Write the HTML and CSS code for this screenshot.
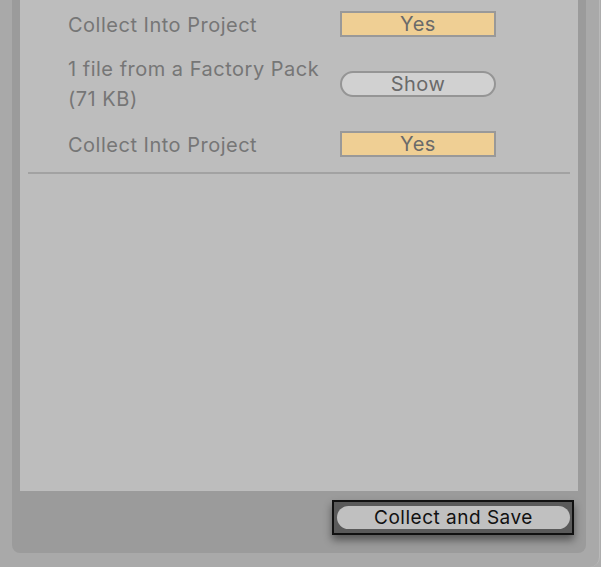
FILE: index.html
```html
<!DOCTYPE html>
<html>
<head>
<meta charset="utf-8">
<link rel="stylesheet" href="styles.css">
</head>
<body>
<div class="frame">
  <div class="dialog">
    <div class="content">
      <div class="row row-single">
        <div class="label">Collect Into Project</div>
        <div class="toggle">Yes</div>
      </div>
      <div class="row row-double">
        <div class="label">1 file from a Factory Pack (71 KB)</div>
        <div class="pill">Show</div>
      </div>
      <div class="row row-single">
        <div class="label">Collect Into Project</div>
        <div class="toggle">Yes</div>
      </div>
      <div class="separator"></div>
    </div>
    <div class="footer">
      <div class="focus-box">
        <div class="primary">Collect and Save</div>
      </div>
    </div>
  </div>
</div>
</body>
</html>
```
FILE: styles.css
```css
html, body {
  margin: 0;
  padding: 0;
}
body {
  width: 601px;
  height: 567px;
  background: #acacac;
  overflow: hidden;
  font-family: Inter, "Liberation Sans", sans-serif;
  font-weight: 400;
}
.frame {
  width: 600px;
  height: 567px;
  border-right: 1px solid #b9b9b9;
  box-sizing: border-box;
  background: #a9a9a9;
  border-radius: 0 0 10px 0;
}
.dialog {
  margin-left: 12px;
  width: 574px;
  height: 553px;
  box-sizing: border-box;
  padding: 0 8px;
  background: #9b9b9b;
  border-radius: 0 0 8px 8px;
  display: flex;
  flex-direction: column;
}
.content {
  height: 491px;
  background: #bdbdbd;
  display: flex;
  flex-direction: column;
}
.row {
  display: flex;
  align-items: center;
  padding-left: 48px;
}
.row-single { height: 48px; }
.row-double { height: 72px; }
.label {
  width: 272px;
  font-size: 20px;
  letter-spacing: 0.5px;
  line-height: 30px;
  color: #767676;
  padding-top: 2px;
}
.row-double .label {
  padding-top: 0;
}
.toggle {
  width: 156px;
  height: 26px;
  box-sizing: border-box;
  border: 2px solid #999999;
  background: #efcf94;
  color: #6a6a6a;
  font-size: 20px;
  letter-spacing: 0.5px;
  line-height: 23px;
  text-align: center;
}
.pill {
  width: 156px;
  height: 26px;
  box-sizing: border-box;
  border: 2px solid #959595;
  border-radius: 13px;
  background: #d1d1d1;
  color: #6a6a6a;
  font-size: 20px;
  letter-spacing: 0.5px;
  line-height: 23px;
  text-align: center;
}
.separator {
  margin: 4px 8px 0;
  height: 2px;
  background: #a2a2a2;
}
.footer {
  flex: 1;
  display: flex;
  justify-content: flex-end;
  align-items: flex-start;
  padding: 9px 4px 0 0;
}
.focus-box {
  width: 242px;
  height: 35px;
  box-sizing: border-box;
  border: 2px solid #111111;
  background: #5a5a5a;
  padding: 4px 2px 4px 3px;
  box-shadow: 0 5px 8px rgba(0, 0, 0, 0.45);
}
.primary {
  height: 23px;
  border-radius: 12px;
  background: #c0c0c0;
  color: #111111;
  font-size: 19px;
  letter-spacing: 0.5px;
  line-height: 24px;
  text-align: center;
}
```
